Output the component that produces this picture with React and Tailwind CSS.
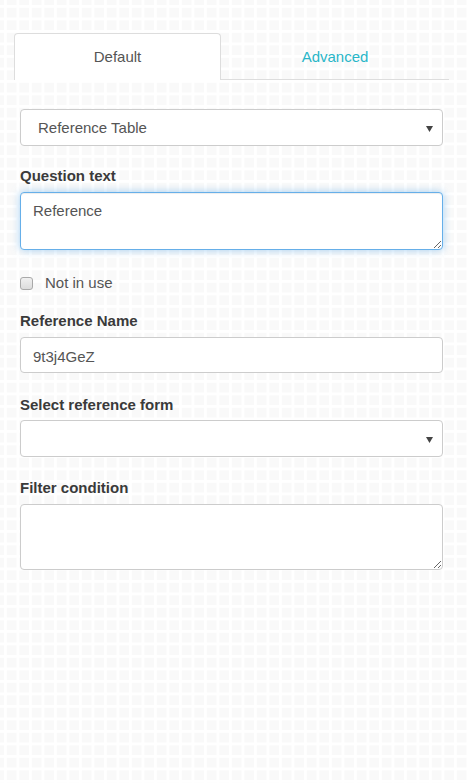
import React from "react";

function Caret() {
  return (
    <svg width="7" height="6" viewBox="0 0 7 6" className="shrink-0">
      <path d="M0 0 L7 0 L3.5 6 Z" fill="#444" />
    </svg>
  );
}

function SelectBox({ value, className = "" }) {
  return (
    <div
      className={`flex items-center justify-between w-[423px] h-[37px] bg-white border border-[#ccc] rounded-[4px] pl-[17px] pr-[9px] pt-[2px] text-[15px] text-[#555] ${className}`}
    >
      <span>{value}</span>
      <Caret />
    </div>
  );
}

function Label({ children, className = "" }) {
  return (
    <div className={`text-[15px] leading-[20px] font-bold text-[#3a3a3a] ${className}`}>
      {children}
    </div>
  );
}

export default function App() {
  return (
    <div
      className="min-h-screen w-full font-['Liberation_Sans',Arial,sans-serif] bg-[#f9f9f9] bg-[linear-gradient(to_right,#ffffff_3px,transparent_3px),linear-gradient(to_bottom,#ffffff_3px,transparent_3px)] bg-size-[12.5px_12.5px] bg-position-[4px_5px] pt-[33px] pb-[40px]"
    >
      <div className="flex ml-[14px] w-[435px]">
        <div className="w-[207px] h-[47px] pt-[1px] bg-white border border-[#ddd] border-b-0 rounded-t-[4px] flex items-center justify-center text-[15px] text-[#555]">
          Default
        </div>
        <div className="w-[228px] h-[47px] pt-[3px] border-b border-[#ddd] flex items-center justify-center text-[15px] text-[#29b6c8]">
          Advanced
        </div>
      </div>

      <div className="px-[20px] mt-[29px] flex flex-col">
        <SelectBox value="Reference Table" />

        <Label className="mt-[20px]">Question text</Label>
        <textarea
          readOnly
          defaultValue="Reference"
          className="mt-[6px] w-[423px] h-[58px] bg-white border border-[#66afe9] rounded-[4px] px-[12px] pt-[8px] pb-[6px] text-[15px] leading-[20px] text-[#555] outline-none shadow-[inset_0_1px_1px_rgba(0,0,0,0.075),0_0_8px_rgba(102,175,233,0.6)]"
        />

        <div className="mt-[23px] h-[20px] flex items-center">
          <span className="w-[13px] h-[13px] rounded-[3px] border border-[#a9a9a9] bg-[linear-gradient(to_bottom,#f0f0f0,#dcdcdc)]" />
          <span className="ml-[12px] pt-[1px] text-[15px] text-[#555]">Not in use</span>
        </div>

        <Label className="mt-[18px]">Reference Name</Label>
        <input
          readOnly
          defaultValue="9t3j4GeZ"
          className="mt-[6px] w-[423px] h-[36px] bg-white border border-[#ccc] rounded-[4px] px-[12px] pt-[2px] text-[15px] text-[#555] outline-none"
        />

        <Label className="mt-[22px]">Select reference form</Label>
        <SelectBox value="" className="mt-[5px]" />

        <Label className="mt-[21px]">Filter condition</Label>
        <textarea
          readOnly
          defaultValue=""
          className="mt-[6px] w-[423px] h-[66px] bg-white border border-[#ccc] rounded-[4px] px-[12px] py-[7px] text-[15px] text-[#555] outline-none"
        />
      </div>
    </div>
  );
}
